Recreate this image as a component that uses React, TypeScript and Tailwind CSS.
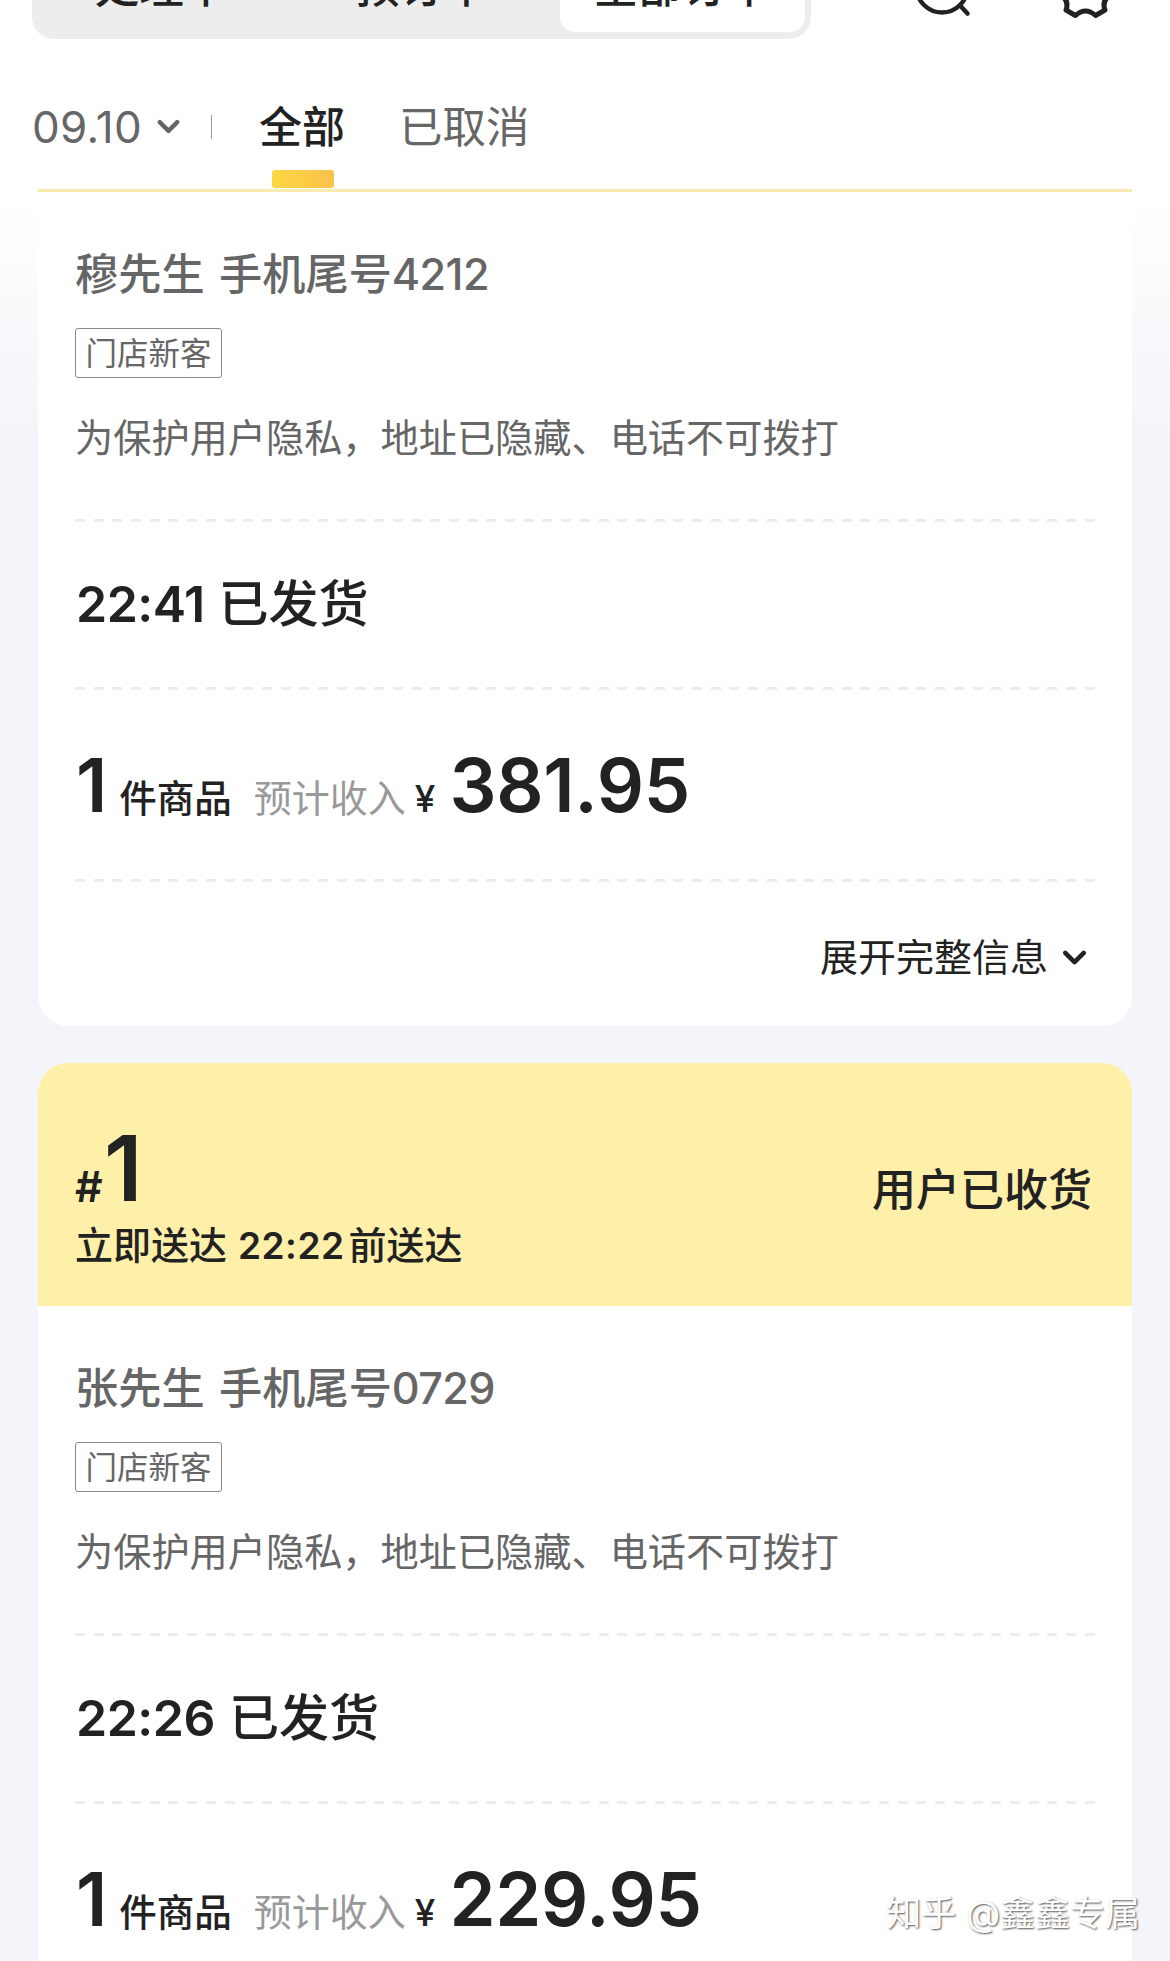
import { ChevronDown } from "lucide-react";
import { clsx } from "clsx";

type Order = {
  id: string;
  seq?: string;
  arrival?: string;
  state?: string;
  name: string;
  phoneTail: string;
  time: string;
  count: number;
  income: string;
};

const orders: Order[] = [
  { id: "a", name: "穆先生", phoneTail: "4212", time: "22:41", count: 1, income: "381.95" },
  {
    id: "b",
    seq: "1",
    arrival: "22:22",
    state: "用户已收货",
    name: "张先生",
    phoneTail: "0729",
    time: "22:26",
    count: 1,
    income: "229.95",
  },
];

const tabs = ["处理中", "预订单", "全部订单"];

function Dashes() {
  return (
    <div className="h-[3px] shrink-0 bg-[repeating-linear-gradient(90deg,#ededed_0_10px,transparent_10px_18.7px)]" />
  );
}

function SearchIcon() {
  return (
    <svg width="60" height="60" viewBox="0 0 60 60" fill="none" stroke="#222" strokeWidth="4.500" strokeLinecap="round">
      <circle cx="29" cy="28" r="25.500" />
      <path d="M47.500 47 54.500 54.500" />
    </svg>
  );
}

function GearIcon() {
  return (
    <svg width="60" height="60" viewBox="0 0 60 60" fill="none" stroke="#222" strokeWidth="5" strokeLinejoin="round">
      <path d="M20 3 Q30 12 40 3 L49 9 Q45 20 57 25 V35 Q45 40 49 51 L39.500 56.500 Q29.500 47.500 19.500 56.500 L10 51 Q14 40 2 35 V25 Q14 20 10 9 Z" />
    </svg>
  );
}

function Header() {
  return (
    <header className="flex h-[192px] flex-col bg-white">
      <div className="flex h-[39px] items-end justify-between pl-8 pr-[54px]">
        <div className="flex h-[94px] w-[779px] rounded-[22px] bg-[#ededed] pb-[7px] pr-[6px]">
          {tabs.map((tab, i) => (
            <button
              key={tab}
              className={clsx(
                "flex items-center justify-center whitespace-nowrap pb-[2px] text-[44.500px] font-medium leading-none text-[#222]",
                i === 2 ? "w-[245px] rounded-[15px] bg-white" : "w-[259px]",
                i === 1 && "mr-[10px] pl-[3px]"
              )}
            >
              {tab}
            </button>
          ))}
        </div>
        <div className="flex gap-[83px] pb-[20px]">
          <SearchIcon />
          <GearIcon />
        </div>
      </div>
      <div className="flex h-[150px] items-center pl-8 pt-[25px] text-[43px] leading-[52px] text-[#666]">
        <span className="w-[119px] text-[44px] tracking-[0.3px]">09.10</span>
        <ChevronDown className="h-[35px] w-[35px] shrink-0" strokeWidth={3} />
        <span className="ml-[25px] h-6 w-px bg-[#999]" />
        <div className="ml-[47px] flex h-[125px] w-[86px] flex-col items-center justify-between pb-px pt-[37px] font-medium text-[#222]">
          <span>全部</span>
          <i className="ml-[2px] h-[18px] w-[62px] rounded-[3px] bg-linear-to-r from-[#fbd843] to-[#fbc14a]" />
        </div>
        <span className="ml-[54px] text-[43.500px]">已取消</span>
      </div>
      <div className="mx-[38px] h-[3px] bg-[#faebb0]" />
    </header>
  );
}

function OrderCard({ order }: { order: Order }) {
  return (
    <section className={clsx("overflow-hidden bg-white", order.seq ? "rounded-[30px]" : "rounded-b-[30px]")}>
      {order.seq && (
        <div className="flex h-[243px] items-start justify-between bg-[#feefa9] pl-[37px] pr-[40px] text-[#222]">
          <div>
            <div className="flex h-[151px] items-end font-semibold leading-none">
              <span className="w-[29px] pb-[6px] text-[43px]">#</span>
              <span className="text-[91px]">{order.seq}</span>
            </div>
            <div className="flex items-baseline pt-[5px] text-[38px] font-medium leading-[52px]">
              <span>立即送达</span>
              <b className="ml-[11px] mr-[4px] text-[37px] font-semibold tracking-[0.5px]">{order.arrival}</b>
              <span>前送达</span>
            </div>
          </div>
          <span className="pt-[99px] text-[44px] font-medium leading-[56px]">{order.state}</span>
        </div>
      )}
      <div className="flex flex-col px-[37px] pt-[49px]">
        <h2 className="flex h-[64px] items-center whitespace-pre pt-[2px] text-[43.200px] font-medium text-[#666] [word-spacing:3px]">
          {order.name} 手机尾号
          <span className="tracking-[-0.6px]">{order.phoneTail}</span>
        </h2>
        <span className="mt-[23px] flex h-[50px] w-[147px] items-center justify-center rounded-[3px] border-[1.500px] border-[#888] pt-[2px] text-[31.500px] leading-none text-[#666]">
          门店新客
        </span>
        <p className="mt-[35px] h-12 text-[38.200px] leading-[50px] text-[#666]">
          为保护用户隐私，地址已隐藏、电话不可拨打
        </p>
        <div className="h-[58px]" />
        <Dashes />
        <div className="flex h-[165px] items-center pb-px pl-px text-[50px] text-[#222]">
          <b className="font-semibold tracking-[-0.5px]">{order.time}</b>
          <span className="ml-[14px] font-medium">已发货</span>
        </div>
        <Dashes />
        <div className="flex h-[189px] items-baseline pl-px pt-[42px] text-[38px] leading-[106px] text-[#222]">
          <b className="text-[74px] font-semibold">{order.count}</b>
          <span className="ml-[12px] text-[37.500px] font-medium">件商品</span>
          <span className="ml-[22px] text-[#999]">预计收入</span>
          <span className="ml-[9px] text-[37px] font-medium">¥</span>
          <b className="ml-[14px] text-[74px] font-semibold tracking-[-0.3px]">{order.income}</b>
        </div>
        <Dashes />
        <button className="flex h-[144px] items-center justify-end pr-[2px] pt-[6px] text-[38px] text-[#222]">
          展开完整信息
          <ChevronDown className="ml-[8px] h-[37px] w-[37px]" strokeWidth={3} />
        </button>
      </div>
    </section>
  );
}

export default function App() {
  return (
    <main className="relative h-[1961px] w-[1170px] overflow-hidden bg-[#f4f5fa] font-['Inter','Noto_Sans_CJK_SC',sans-serif]">
      <Header />
      <div className="flex flex-col gap-[37px] bg-linear-to-b from-white to-[#f4f5fa] to-[240px] px-[38px]">
        {orders.map((order) => (
          <OrderCard key={order.id} order={order} />
        ))}
      </div>
      <p className="absolute bottom-[22px] right-[30px] text-[35px] leading-[52px] text-white [text-shadow:1px_1px_2px_#555]">
        知乎 @鑫鑫专属
      </p>
    </main>
  );
}
